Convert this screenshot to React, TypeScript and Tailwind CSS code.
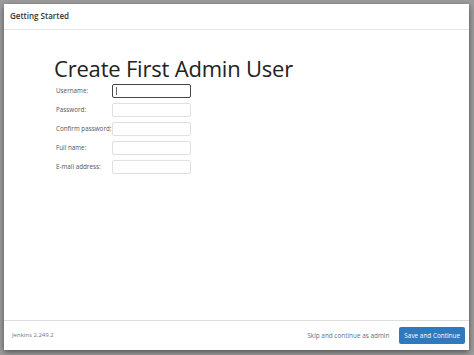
import React from 'react';

const fields = ['Username:', 'Password:', 'Confirm password:', 'Full name:', 'E-mail address:'];

export default function App() {
  return (
    <div className="w-[474px] h-[355px] bg-[#9d9d9d] pt-[4px] pl-[4px] pr-[5px] pb-[5px] font-['Open_Sans',sans-serif]">
      <div className="flex h-full flex-col bg-white shadow-[0_2px_6px_rgba(0,0,0,0.5)]">
        <div className="h-[26px] border-b border-[#e5e5e5] px-[6px] pt-[7px] text-[8px] font-semibold leading-[10px] text-[#333]">
          Getting Started
        </div>
        <div className="flex-1 pl-[50px] pt-[26px]">
          <h1 className="text-[22px] font-medium leading-[24px] tracking-[-0.2px] text-[#222]">Create First Admin User</h1>
          <div className="mt-[4px] flex flex-col gap-[5px]">
            {fields.map((f, i) => (
              <div key={f} className="flex items-center">
                <span className="w-[58px] whitespace-nowrap pl-[2px] text-[6.3px] text-[#555]">{f}</span>
                {i === 0 ? (
                  <div className="flex h-[14px] w-[79px] items-center rounded-[2px] border border-[#444] pl-[3px]">
                    <div className="h-[8px] w-px bg-[#666]" />
                  </div>
                ) : (
                  <div className="h-[14px] w-[79px] rounded-[2px] border border-[#e0e0e0]" />
                )}
              </div>
            ))}
          </div>
        </div>
        <div className="flex h-[30px] items-center border-t border-[#dcdcdc] pl-[8px] pr-[4px]">
          <span className="text-[6px] text-[#777]">Jenkins 2.249.2</span>
          <span className="ml-auto text-[6.4px] text-[#5a6f88]">Skip and continue as admin</span>
          <button className="ml-[10px] h-[17px] rounded-[2px] bg-[#2f79bf] px-[5px] text-[6.4px] text-white">
            Save and Continue
          </button>
        </div>
      </div>
    </div>
  );
}
